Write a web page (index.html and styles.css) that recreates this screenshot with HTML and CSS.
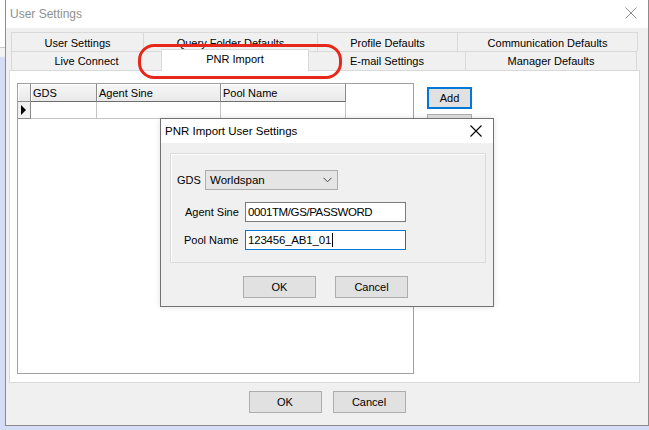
FILE: index.html
```html
<!DOCTYPE html>
<html lang="en">

<head>
	<meta charset="UTF-8">
	<meta name="viewport" content="width=device-width, initial-scale=1.0">
	<title>User Settings</title>

	<link rel="stylesheet" href="styles.css">
</head>

<body>
	<div class="window">
		<header class="titlebar">
			<span class="title">User Settings</span>
			<svg class="close" width="12" height="12" viewBox="0 0 12 12">
				<path d="M0.5 0.5 L11.5 11.5 M11.5 0.5 L0.5 11.5" stroke="#8f8f8f" stroke-width="1" fill="none" />
			</svg>
		</header>

		<nav class="tabs">
			<div class="tab-row">
				<div class="tab tab-user">User Settings</div>
				<div class="tab tab-query">Query Folder Defaults</div>
				<div class="tab tab-profile">Profile Defaults</div>
				<div class="tab tab-comm">Communication Defaults</div>
			</div>
			<div class="tab-row">
				<div class="tab tab-live">Live Connect</div>
				<div class="tab tab-pnr active">PNR Import</div>
				<div class="tab tab-email">E-mail Settings</div>
				<div class="tab tab-manager">Manager Defaults</div>
			</div>
		</nav>

		<section class="panel">
			<div class="grid">
				<div class="grid-row grid-head">
					<div class="cell row-head"></div>
					<div class="cell col-gds">GDS</div>
					<div class="cell col-agent">Agent Sine</div>
					<div class="cell col-pool">Pool Name</div>
				</div>
				<div class="grid-row">
					<div class="cell row-head"><span class="arrow"></span></div>
					<div class="cell col-gds"></div>
					<div class="cell col-agent"></div>
					<div class="cell col-pool"></div>
				</div>
			</div>

			<div class="side-buttons">
				<button class="btn btn-small btn-default">Add</button>
				<button class="btn btn-small">Edit</button>
			</div>
		</section>

		<footer class="footer">
			<button class="btn">OK</button>
			<button class="btn">Cancel</button>
		</footer>

		<div class="highlight"></div>

		<div class="dialog">
			<header class="dialog-title">
				<span>PNR Import User Settings</span>
				<svg class="dialog-close" width="12" height="12" viewBox="0 0 12 12">
					<path d="M0.5 0.5 L11.5 11.5 M11.5 0.5 L0.5 11.5" stroke="#000" stroke-width="1.1" fill="none" />
				</svg>
			</header>

			<div class="group">
				<div class="field field-gds">
					<label class="label-gds">GDS</label>
					<div class="select">
						<span>Worldspan</span>
						<svg width="9" height="6" viewBox="0 0 9 6">
							<path d="M0.5 0.8 L4.5 4.8 L8.5 0.8" stroke="#444" stroke-width="1" fill="none" />
						</svg>
					</div>
				</div>
				<div class="field field-agent">
					<label>Agent Sine</label>
					<div class="input">0001TM/GS/PASSWORD</div>
				</div>
				<div class="field field-pool">
					<label>Pool Name</label>
					<div class="input focused">123456_AB1_01<span class="caret"></span></div>
				</div>
			</div>

			<div class="dialog-buttons">
				<button class="btn">OK</button>
				<button class="btn">Cancel</button>
			</div>
		</div>
	</div>
</body>

</html>
```

FILE: styles.css
```css
*,
*::before,
*::after {
	margin: 0;
	padding: 0;
	box-sizing: border-box;

	font-family: "Liberation Sans", Arial, sans-serif;
	font-size: 11px;

	--text-color: #000;
	--border-color: #d9d9d9;
	--grid-color: #a0a0a0;
	--button-color: #e1e1e1;
	--button-border: #adadad;
	--focus-color: #0078d7;
	--window-color: #f0f0f0;
}

body {
	height: 430px;
	overflow: hidden;
	background: linear-gradient(to bottom, #fff 0, #fff 47px, #c9c9c9 47px, #c9c9c9 48px, #f4f4f4 48px, #f4f4f4 56px, #d4dcf6 58px);
}

.window {
	width: 644px;
	height: 426px;
	margin-left: 5px;

	position: relative;

	display: flex;
	flex-direction: column;

	border: 1px solid #8c8c8c;
	border-top: none;
	background-color: var(--window-color);
	color: var(--text-color);
}

.titlebar {
	height: 28px;
	padding: 0 11px 0 4px;

	display: flex;
	justify-content: space-between;
	align-items: center;

	background-color: #fff;
}

.titlebar .title {
	font-size: 12px;
	color: #8f8f8f;
	margin-top: -1px;
}

.titlebar .close {
	margin-top: -2px;
}

/* tabs */

.tabs {
	margin: 4px 0 0 5px;
}

.tab-row {
	height: 19px;
	display: flex;
}

.tab {
	height: 19px;

	display: flex;
	justify-content: center;
	align-items: center;

	border: 1px solid var(--border-color);
	border-right: none;
	border-bottom: none;
	background-color: var(--window-color);
	white-space: nowrap;
}

.tab-comm,
.tab-manager {
	border-right: 1px solid var(--border-color);
}

.tab-user { width: 132px; padding-top: 2px; }
.tab-query { width: 174px; padding-top: 2px; }
.tab-profile { width: 140px; padding-top: 2px; }
.tab-comm { width: 181px; padding-top: 2px; }

.tab-live { width: 150px; }
.tab-pnr { width: 148px; }
.tab-email { width: 157px; }
.tab-manager { width: 172px; }

.tab.active {
	height: 22px;
	margin-top: -2px;
	margin-right: -1px;
	padding-bottom: 4px;

	position: relative;
	z-index: 1;

	border-right: 1px solid var(--border-color);
	background-color: #fff;
}

/* panel */

.panel {
	width: 631px;
	height: 313px;
	margin-left: 3px;
	padding: 12px 0 0 7px;

	display: flex;
	gap: 13px;

	border: 1px solid var(--border-color);
	background-color: #fff;
}

.grid {
	width: 397px;
	height: 291px;

	border: 1px solid var(--grid-color);
	background-color: #fff;
}

.grid-row {
	height: 17px;
	display: flex;
}

.grid-head {
	height: 18px;
}

.cell {
	height: 100%;
	padding-left: 2px;

	display: flex;
	align-items: center;

	border-right: 1px solid #c4c4c4;
	border-bottom: 1px solid #c4c4c4;
}

.grid-head .cell {
	border-right: 1px solid #8a8a8a;
	border-bottom: 1px solid #6e6e6e;
	background: linear-gradient(to bottom, #f7f7f7, #e9e9e9);
	box-shadow: inset 1px 1px #fff;
}

.row-head {
	width: 13px;
	background-color: var(--window-color);
}

.grid-row .row-head {
	border-right: 1px solid #8a8a8a;
	border-bottom: 1px solid #8a8a8a;
}

.col-gds { width: 66px; }
.col-agent { width: 124px; }
.col-pool { width: 125px; }

.arrow {
	width: 0;
	height: 0;
	margin-left: 1px;

	border-top: 5px solid transparent;
	border-bottom: 5px solid transparent;
	border-left: 5px solid #000;
}

.side-buttons {
	margin-top: 4px;

	display: flex;
	flex-direction: column;
	gap: 5px;
}

/* buttons */

.btn {
	width: 73px;
	height: 22px;

	border: 1px solid var(--button-border);
	background-color: var(--button-color);
	color: var(--text-color);
}

.btn-small {
	width: 45px;
}

.btn-default {
	border: 2px solid var(--focus-color);
}

.footer {
	margin-top: 8px;

	display: flex;
	justify-content: center;
	gap: 11px;
}

.highlight {
	width: 204px;
	height: 35px;

	position: absolute;
	left: 132px;
	top: 44px;
	z-index: 2;

	border: 3px solid #e5281b;
	border-radius: 16px;
}

/* dialog */

.dialog {
	width: 334px;
	height: 189px;

	position: absolute;
	left: 154px;
	top: 118px;
	z-index: 3;

	border: 1px solid #727272;
	background-color: var(--window-color);
	box-shadow: 0 0 6px rgba(0, 0, 0, 0.12);
}

.dialog-title {
	height: 24px;
	padding: 0 11px 0 4px;

	display: flex;
	justify-content: space-between;
	align-items: center;

	background-color: #fff;
}

.dialog-title span {
	font-size: 11.5px;
}

.group {
	width: 316px;
	height: 110px;
	margin: 10px 0 0 9px;
	padding-top: 16px;

	border: 1px solid #dadada;
	box-shadow: inset 1px 1px #fff;
}

.field {
	display: flex;
	align-items: center;
}

.field-gds {
	padding-left: 6px;
}

.field-agent {
	margin-top: 12px;
	padding-left: 14px;
}

.field-pool {
	margin-top: 8px;
	padding-left: 13px;
}

.field label {
	width: 60px;
}

.field-pool label {
	width: 61px;
}

.field .label-gds {
	width: 28px;
}

.select {
	width: 133px;
	height: 20px;
	padding: 0 5px 0 4px;

	display: flex;
	justify-content: space-between;
	align-items: center;

	border: 1px solid var(--button-border);
	background-color: #e5e5e5;
	font-size: 11.5px;
}

.select span {
	font-size: 11.5px;
}

.input {
	width: 161px;
	height: 20px;
	padding-left: 2px;

	display: flex;
	align-items: center;

	border: 1px solid #7a7a7a;
	background-color: #fff;
	letter-spacing: -0.4px;
	font-size: 11.5px;
}

.input.focused {
	border-color: var(--focus-color);
	letter-spacing: -0.2px;
}

.caret {
	width: 1px;
	height: 14px;
	margin-left: 1px;
	background-color: #000;
}

.dialog-buttons {
	margin-top: 13px;
	padding-right: 3px;

	display: flex;
	justify-content: center;
	gap: 19px;
}
```
